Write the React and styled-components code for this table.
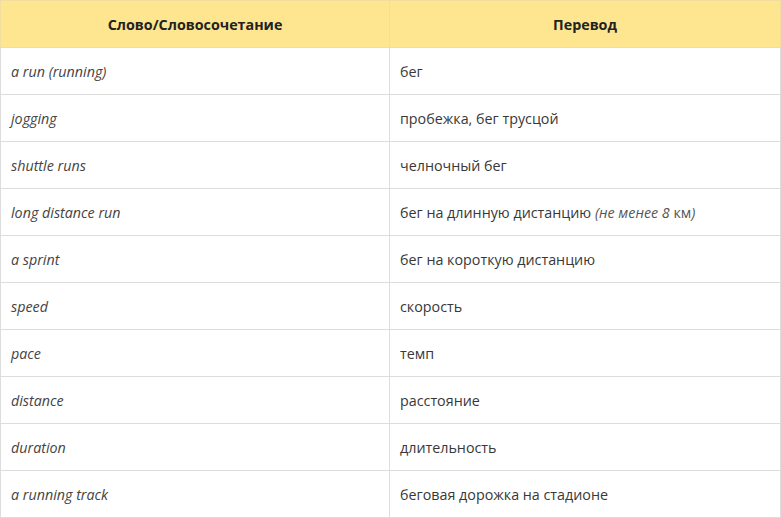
import React from "react";
import styled, { createGlobalStyle } from "styled-components";

const GlobalStyle = createGlobalStyle`
	html, body {
		margin: 0;
		padding: 0;
		background: #fff;
	}
	body {
		font-family: "Open Sans", "Noto Sans", sans-serif;
	}
`;

const Table = styled.table`
	width: 781px;
	border-collapse: collapse;
	table-layout: fixed;
	font-size: 14.3px;
	color: #383838;
`;

const HeadCell = styled.th`
	height: 46px;
	padding: 0 10px;
	background: #fee690;
	border: 1px solid #f2dca0;
	font-weight: 700;
	color: #222;
	text-align: center;
`;

const Cell = styled.td`
	height: 46px;
	padding: 0 10px;
	border: 1px solid #ddd;
	font-style: ${p => (p.$italic ? "italic" : "normal")};
	color: ${p => (p.$italic ? "#444" : "#383838")};
	vertical-align: middle;
`;

const Note = styled.i`
	color: #555;
`;

const Upright = styled.span`
	font-style: normal;
`;

const rows = [
	["a run (running)", "бег"],
	["jogging", "пробежка, бег трусцой"],
	["shuttle runs", "челночный бег"],
	["long distance run", <>бег на длинную дистанцию <Note>(не менее 8 <Upright>км</Upright>)</Note></>],
	["a sprint", "бег на короткую дистанцию"],
	["speed", "скорость"],
	["pace", "темп"],
	["distance", "расстояние"],
	["duration", "длительность"],
	["a running track", "беговая дорожка на стадионе"]
];

export default function App() {
	return (
		<>
			<GlobalStyle/>
			<Table>
				<colgroup>
					<col style={{ width: 389 }}/>
					<col/>
				</colgroup>
				<thead>
					<tr>
						<HeadCell>Слово/Словосочетание</HeadCell>
						<HeadCell>Перевод</HeadCell>
					</tr>
				</thead>
				<tbody>
					{rows.map(([word, translation], i) => (
						<tr key={i}>
							<Cell $italic>{word}</Cell>
							<Cell>{translation}</Cell>
						</tr>
					))}
				</tbody>
			</Table>
		</>
	);
}
